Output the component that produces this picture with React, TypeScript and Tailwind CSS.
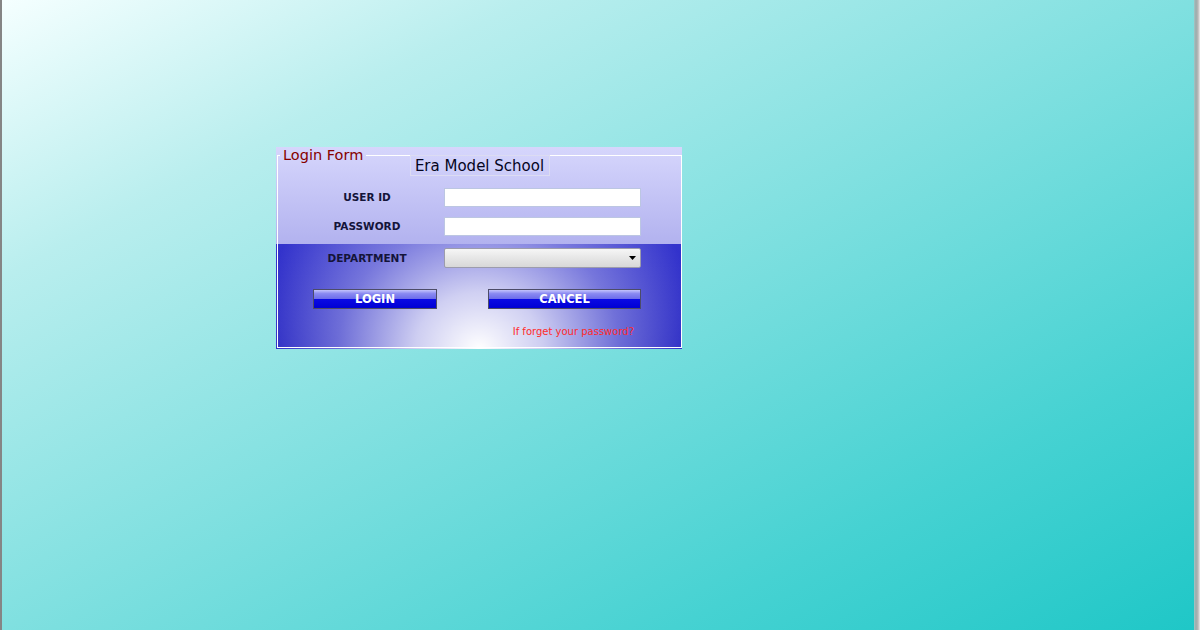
const font = "font-['DejaVu_Sans',Verdana,sans-serif]";

const Field = ({ label, children, className = "" }: { label: string; children: React.ReactNode; className?: string }) => (
  <div className={`flex items-center gap-[7px] ${className}`}>
    <div className="w-[140px] text-center text-[10.5px] font-bold text-[#14143a] leading-none">{label}</div>
    {children}
  </div>
);

const Button = ({ label, width }: { label: string; width: string }) => (
  <button
    className={`${width} h-[20px] pt-[2px] border border-[#4c4c68] bg-[linear-gradient(180deg,#c4c4fc_0%,#8a8af2_20%,#6c6cea_50%,#0a0ae4_50%,#0000d4_100%)] text-[11.5px] font-bold text-white leading-none`}
  >
    {label}
  </button>
);

export default function App() {
  return (
    <div className={`flex w-[1200px] h-[630px] ${font}`}>
      <div className="w-[2px] bg-[#858585]" />
      <div className="flex-1 pt-[147px] pl-[274px] bg-[linear-gradient(to_bottom_right,#f5ffff_0%,#b9eeee_22%,#80e0e0_50%,#46d2d2_78%,#1fc7c7_100%)]">
        <div className="w-[406px] h-[202px] [background:linear-gradient(180deg,#d6d6fc,#b2b2ef)_top/100%_97px_no-repeat,radial-gradient(ellipse_56%_100%_at_50%_100%,#ffffff_0%,rgba(255,255,255,0.78)_28%,rgba(255,255,255,0.35)_62%,rgba(255,255,255,0)_100%),linear-gradient(180deg,#4a4ad8,#1c1cc0)]">
          <fieldset className="ml-[1px] w-[405px] h-[201px] border border-white">
            <legend className="ml-[2px] pl-[3px] pr-[3px] text-[14.5px] leading-[16px] text-[#860000]">Login Form</legend>
            <div className="-mt-[8px] mx-auto w-[140px] h-[21px] pt-[2px] border border-[#dcdcf2] flex items-center justify-center text-[15px] leading-none text-[#05051e]">
              Era Model School
            </div>
            <div className="pl-[19px]">
              <Field label="USER ID" className="mt-[12px]">
                <input className="w-[197px] h-[19px] bg-white border border-[#bcc6e2] outline-none" />
              </Field>
              <Field label="PASSWORD" className="mt-[10px]">
                <input type="password" className="w-[197px] h-[19px] bg-white border border-[#bcc6e2] outline-none" />
              </Field>
              <Field label="DEPARTMENT" className="mt-[12px]">
                <div className="w-[197px] h-[20px] rounded-[2px] border border-[#9c9cac] bg-[linear-gradient(180deg,#f6f6f6,#e6e6e6_50%,#d8d8d8)] flex items-center justify-end pr-[4px]">
                  <svg width="7" height="4" viewBox="0 0 7 4">
                    <path d="M0 0h7L3.5 4z" fill="#000" />
                  </svg>
                </div>
              </Field>
              <div className="flex mt-[21px] pl-[16px] gap-[51px]">
                <Button label="LOGIN" width="w-[124px]" />
                <Button label="CANCEL" width="w-[153px]" />
              </div>
            </div>
            <div className="flex justify-end pr-[47px] mt-[17px]">
              <span className="text-[10px] leading-[12px] text-[#ff2a2a]">If forget your password?</span>
            </div>
          </fieldset>
        </div>
      </div>
      <div className="w-[6px] bg-[linear-gradient(90deg,#a6c4c4,#9aacac,#b8b8b8,#ececec)]" />
    </div>
  );
}
